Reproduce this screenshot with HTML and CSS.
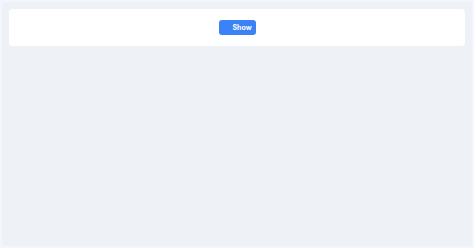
FILE: index.html
```html
<!DOCTYPE html>
<html lang="en">
<head>
    <meta charset="UTF-8">
    <title>Show</title>
    <link rel="stylesheet" href="styles.css">
</head>
<body>
    <div class="page">
        <div class="card">
            <button class="show-button">Show</button>
        </div>
    </div>
</body>
</html>
```

FILE: styles.css
```css
html, body {
    height: 100%;
}

body {
    margin: 0;
    padding: 2px;
    box-sizing: border-box;
    background-color: #f3f6fc;
    font-family: 'Inter', 'Liberation Sans', sans-serif;
}

.page {
    height: 100%;
    box-sizing: border-box;
    padding: 7px;
    background-color: #eef1f6;
}

.card {
    background-color: #fff;
    border-radius: 4px;
    height: 37px;
    display: flex;
    justify-content: center;
    align-items: center;
}

.show-button {
    background-color: #3b82f6;
    color: #fff;
    border: none;
    border-radius: 3px;
    height: 15px;
    width: 37px;
    padding: 0 8px 0 14px;
    font-family: inherit;
    font-size: 7px;
    font-weight: 700;
    cursor: pointer;
}
```
